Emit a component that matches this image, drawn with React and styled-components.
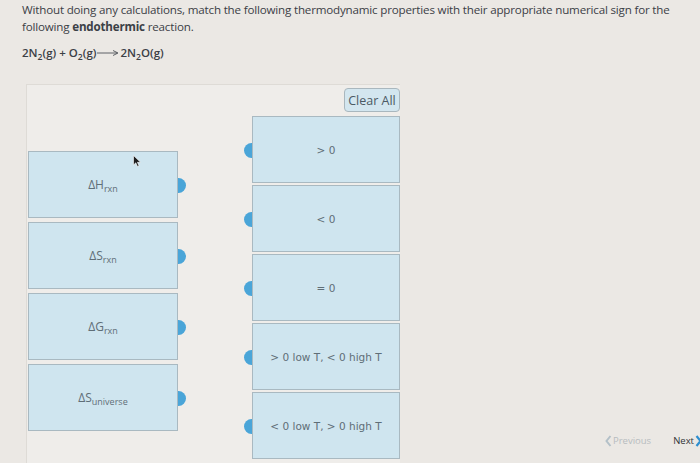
import React from 'react';
import styled, { createGlobalStyle } from 'styled-components';

const GlobalStyle = createGlobalStyle`
  html, body {
    margin: 0;
    padding: 0;
    height: 463px;
    overflow: hidden;
    background: #ebe8e4;
  }
  body {
    font-family: "Open Sans", "Liberation Sans", sans-serif;
    color: #3a3f44;
  }
`;

const Page = styled.div`
  width: 700px;
  height: 463px;
  padding: 1px 0 0 22px;
  box-sizing: border-box;
  display: flex;
  flex-direction: column;
`;

const Prompt = styled.p`
  margin: 0;
  width: 670px;
  font-size: 11.6px;
  letter-spacing: -0.18px;
  line-height: 17px;
  color: #3b4046;
`;

const Equation = styled.div`
  margin-top: 10px;
  font-size: 11.5px;
  font-weight: 600;
  color: #3b4046;
  display: flex;
  align-items: center;
`;

const Arrow = styled.svg`
  width: 22px;
  height: 8px;
  margin: 0 1px;
`;

const Main = styled.div`
  flex: 1;
  display: flex;
  align-items: flex-end;
  margin-top: 24px;
  margin-left: 4px;
`;

const Panel = styled.div`
  align-self: stretch;
  width: 374px;
  display: grid;
  grid-template-columns: 150px 148px;
  column-gap: 74px;
  padding: 0 1px 0 1px;
  background: #efedea;
  border-top: 1px solid #dedbd6;
  border-left: 1px solid #dedbd6;
  box-sizing: border-box;
`;

const Column = styled.div`
  display: flex;
  flex-direction: column;
  gap: ${p => p.$gap}px;
  padding-top: ${p => p.$top}px;
`;

const ClearRow = styled.div`
  display: flex;
  justify-content: flex-end;
  margin-bottom: 2px;
`;

const ClearButton = styled.button`
  height: 24px;
  width: 56px;
  padding: 0;
  border: 1px solid #a9b7be;
  border-radius: 4px;
  background: #d3e6ef;
  color: #4c5a64;
  font-family: "Open Sans", "Liberation Sans", sans-serif;
  font-size: 12.5px;
  cursor: pointer;
`;

const Card = styled.div`
  position: relative;
  height: 67px;
  box-sizing: border-box;
  background: #cfe5ef;
  border: 1px solid #a9b9c1;
  display: flex;
  align-items: center;
  justify-content: center;
  font-family: ${p => (p.$tab === 'left' ? '"DejaVu Sans", "Open Sans", sans-serif' : '"Open Sans", "Liberation Sans", sans-serif')};
  font-size: ${p => (p.$tab === 'left' ? '10.5px' : '12px')};
  color: #5f6e77;

  &::after {
    content: "";
    position: absolute;
    top: 50%;
    width: 8px;
    height: 15px;
    margin-top: -7px;
    background: #4aa5d8;
    ${p => p.$tab === 'right'
      ? 'right: -9px; border-radius: 0 8px 8px 0;'
      : 'left: -9px; border-radius: 8px 0 0 8px;'}
  }
`;

const Sub = styled.sub`
  font-size: 0.75em;
  vertical-align: -3px;
  line-height: 0;
`;

const Cursor = styled.svg`
  position: absolute;
  left: 104px;
  top: 3px;
  width: 8px;
  height: 12px;
`;

const Nav = styled.div`
  margin-left: auto;
  margin-right: -2px;
  margin-bottom: 16px;
  display: flex;
  align-items: center;
  gap: 22px;
  font-family: "Open Sans", "Liberation Sans", sans-serif;
  font-size: 9.5px;
`;

const NavLink = styled.span`
  display: flex;
  align-items: center;
  gap: 1px;
  color: ${p => (p.$disabled ? '#b7bcbf' : '#2f3438')};
`;

const Chevron = styled.svg`
  width: 7px;
  height: 12px;
`;

const leftItems = [
  { base: 'ΔH', sub: 'rxn' },
  { base: 'ΔS', sub: 'rxn' },
  { base: 'ΔG', sub: 'rxn' },
  { base: 'ΔS', sub: 'universe' },
];

const rightItems = [
  '> 0',
  '< 0',
  '= 0',
  '> 0 low T, < 0 high T',
  '< 0 low T, > 0 high T',
];

export default function App() {
  return (
    <>
      <GlobalStyle />
      <Page>
        <Prompt>
          Without doing any calculations, match the following thermodynamic properties with their appropriate numerical sign for the
          following <b>endothermic</b> reaction.
        </Prompt>
        <Equation>
          <span>2N<Sub>2</Sub>(g) + O<Sub>2</Sub>(g)</span>
          <Arrow viewBox="0 0 22 8">
            <line x1="0" y1="4" x2="20" y2="4" stroke="#3b4046" strokeWidth="0.8" />
            <path d="M16 1.5 L21 4 L16 6.5" fill="none" stroke="#3b4046" strokeWidth="0.8" />
          </Arrow>
          <span>2N<Sub>2</Sub>O(g)</span>
        </Equation>

        <Main>
          <Panel>
            <Column $top={66} $gap={4}>
              {leftItems.map((it, i) => (
                <Card key={i} $tab="right">
                  {i === 0 && (
                    <Cursor viewBox="0 0 8 12">
                      <path d="M0.5 0.5 L0.5 10 L2.8 7.8 L4.5 11.5 L6 10.8 L4.4 7.3 L7.5 7.3 Z" fill="#1e1e1e" stroke="#fff" strokeWidth="0.6" />
                    </Cursor>
                  )}
                  <span>{it.base}<Sub>{it.sub}</Sub></span>
                </Card>
              ))}
            </Column>
            <Column $top={3} $gap={2}>
              <ClearRow>
                <ClearButton>Clear All</ClearButton>
              </ClearRow>
              {rightItems.map((t, i) => (
                <Card key={i} $tab="left">{t}</Card>
              ))}
            </Column>
          </Panel>

          <Nav>
            <NavLink $disabled>
              <Chevron viewBox="0 0 7 12">
                <path d="M5.5 1 L1.5 6 L5.5 11" fill="none" stroke="#b3c0c8" strokeWidth="2" />
              </Chevron>
              Previous
            </NavLink>
            <NavLink>
              Next
              <Chevron viewBox="0 0 7 12">
                <path d="M1.5 1 L5.5 6 L1.5 11" fill="none" stroke="#2f8fd0" strokeWidth="2.2" />
              </Chevron>
            </NavLink>
          </Nav>
        </Main>
      </Page>
    </>
  );
}
